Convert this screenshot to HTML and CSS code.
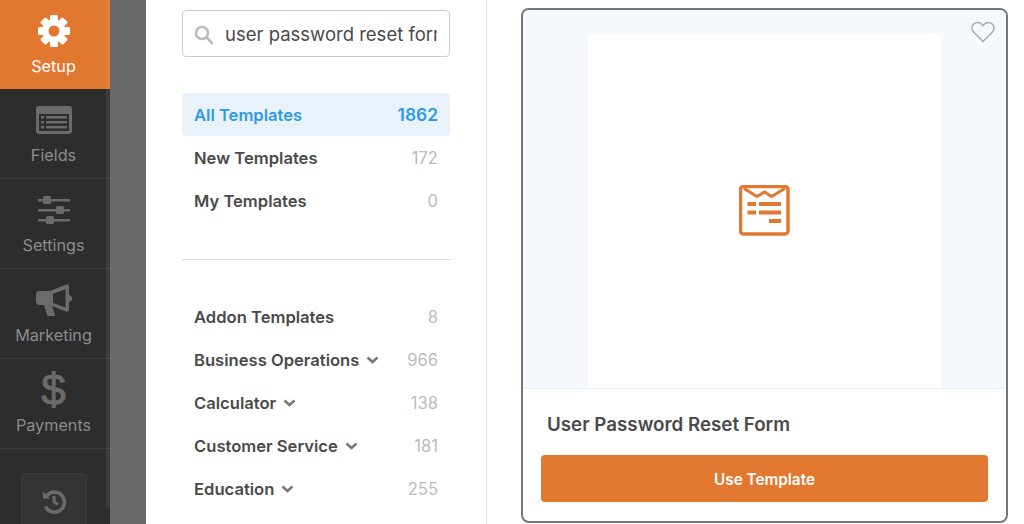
FILE: index.html
```html
<!DOCTYPE html>
<html lang="en">
<head>
<meta charset="UTF-8">
<title>Form Templates</title>
<link rel="stylesheet" href="styles.css">
</head>
<body>
<div class="page">
  <nav class="nav">
    <a class="nav-item active">
      <span class="nav-icon">
        <svg width="36" height="36" viewBox="0 0 36 36">
          <g fill="#fff">
            <rect x="14" y="2" width="8" height="32" rx="1.5"/>
            <rect x="14" y="2" width="8" height="32" rx="1.5" transform="rotate(45 18 18)"/>
            <rect x="14" y="2" width="8" height="32" rx="1.5" transform="rotate(90 18 18)"/>
            <rect x="14" y="2" width="8" height="32" rx="1.5" transform="rotate(135 18 18)"/>
          </g>
          <circle cx="18" cy="18" r="8.5" fill="none" stroke="#fff" stroke-width="6"/>
          <circle cx="18" cy="18" r="5.5" fill="#e27730"/>
        </svg>
      </span>
      <span class="nav-label">Setup</span>
    </a>
    <a class="nav-item">
      <span class="nav-icon">
        <svg width="36" height="28" viewBox="0 0 36 28">
          <rect width="36" height="28" rx="3" fill="#6b6b6b"/>
          <rect x="3" y="8" width="30" height="17" fill="#2d2d2d"/>
          <g fill="#6b6b6b">
            <rect x="5" y="10" width="3" height="2.5"/>
            <rect x="5" y="15" width="3" height="2.5"/>
            <rect x="5" y="20" width="3" height="2.5"/>
            <rect x="10" y="10" width="21" height="2.5"/>
            <rect x="10" y="15" width="21" height="2.5"/>
            <rect x="10" y="20" width="21" height="2.5"/>
          </g>
        </svg>
      </span>
      <span class="nav-label">Fields</span>
    </a>
    <a class="nav-item">
      <span class="nav-icon">
        <svg width="32" height="30" viewBox="0 0 32 30" fill="#6b6b6b">
          <rect y="4" width="32" height="2.5"/>
          <rect y="14" width="32" height="2.5"/>
          <rect y="24" width="32" height="2.5"/>
          <rect x="5" y="1" width="8" height="8" rx="1.5"/>
          <rect x="18" y="11" width="8" height="8" rx="1.5"/>
          <rect x="8" y="21" width="8" height="8" rx="1.5"/>
        </svg>
      </span>
      <span class="nav-label">Settings</span>
    </a>
    <a class="nav-item">
      <span class="nav-icon">
        <svg width="36" height="32" viewBox="0 0 36 32" fill="#6b6b6b">
          <path d="M0 10.500C0 8.500 1.500 7 3.500 7H14L30 .5C31.500 0 33 .500 33 2.500V11C35 11.500 36 12.800 36 14.500S35 17.500 33 18V25.500C33 27.500 31.500 28 30 27.500L16 22L19 30.500C19.300 31.500 18.500 32 17.800 32H12.500C11.800 32 11.300 31.500 11 30.800L8 21H3.500C1.500 21 0 19.500 0 17.500ZM17 10V19L29.500 23.500V5Z" fill-rule="evenodd"/>
        </svg>
      </span>
      <span class="nav-label">Marketing</span>
    </a>
    <a class="nav-item">
      <span class="nav-icon dollar">$</span>
      <span class="nav-label">Payments</span>
    </a>
    <div class="nav-bottom">
      <button class="undo-btn">
        <svg width="28" height="28" viewBox="0 0 28 28" fill="none" stroke="#6b6b6b" stroke-width="3.500">
          <path d="M7 8.500A10 10 0 1 1 5.500 19.500"/>
          <path d="M14 9V15L18 17.500" stroke-width="3"/>
          <path d="M3 4.500V11.500H10Z" fill="#6b6b6b" stroke="none"/>
        </svg>
      </button>
    </div>
    <div class="nav-scroll"></div>
  </nav>
  <div class="shade"></div>

  <aside class="panel">
    <div class="search">
      <svg class="search-icon" width="20" height="20" viewBox="0 0 20 20" fill="none" stroke="#bbb" stroke-width="2.500">
        <circle cx="8" cy="8" r="6"/>
        <path d="M12.500 12.500L18 18" stroke-linecap="round"/>
      </svg>
      <input class="search-input" type="text" value="user password reset form">
    </div>

    <ul class="tpl-list">
      <li class="tpl-row selected"><span class="tpl-name">All Templates</span><span class="tpl-count">1862</span></li>
      <li class="tpl-row"><span class="tpl-name">New Templates</span><span class="tpl-count">172</span></li>
      <li class="tpl-row"><span class="tpl-name">My Templates</span><span class="tpl-count">0</span></li>
    </ul>

    <hr class="divider">

    <ul class="tpl-list lower">
      <li class="tpl-row"><span class="tpl-name">Addon Templates</span><span class="tpl-count">8</span></li>
      <li class="tpl-row"><span class="tpl-name">Business Operations <svg class="chev" width="13" height="8" viewBox="0 0 13 8"><path d="M1.500 1.500L6.500 6L11.500 1.500"/></svg></span><span class="tpl-count">966</span></li>
      <li class="tpl-row"><span class="tpl-name">Calculator <svg class="chev" width="13" height="8" viewBox="0 0 13 8"><path d="M1.500 1.500L6.500 6L11.500 1.500"/></svg></span><span class="tpl-count">138</span></li>
      <li class="tpl-row"><span class="tpl-name">Customer Service <svg class="chev" width="13" height="8" viewBox="0 0 13 8"><path d="M1.500 1.500L6.500 6L11.500 1.500"/></svg></span><span class="tpl-count">181</span></li>
      <li class="tpl-row"><span class="tpl-name">Education <svg class="chev" width="13" height="8" viewBox="0 0 13 8"><path d="M1.500 1.500L6.500 6L11.500 1.500"/></svg></span><span class="tpl-count">255</span></li>
    </ul>
  </aside>

  <main class="main">
    <div class="card">
      <div class="preview">
        <svg class="heart" width="24" height="22" viewBox="0 0 24 22" fill="none" stroke="#aaa" stroke-width="1.500">
          <path d="M12 20.500L2.800 11.300C.4 8.900 .4 5.100 2.800 3C5.100 .9 8.600 1.200 10.700 3.300L12 4.600L13.300 3.300C15.400 1.200 18.900 .9 21.200 3C23.600 5.100 23.600 8.900 21.200 11.300Z"/>
        </svg>
        <div class="sheet">
          <svg class="form-icon" width="51" height="51" viewBox="0 0 51 51">
            <rect x="1.500" y="1.500" width="47.500" height="47.500" rx="3" fill="none" stroke="#e27730" stroke-width="3.500"/>
            <path d="M5 3.500L18 11.500L25.500 7L32.500 11.500L46 3.500" fill="none" stroke="#e27730" stroke-width="3"/>
            <g fill="#e27730">
              <rect x="8.500" y="17" width="8.500" height="4"/>
              <rect x="20" y="17" width="22" height="4"/>
              <rect x="8.500" y="25.500" width="8.500" height="4"/>
              <rect x="20" y="25.500" width="22" height="4"/>
              <rect x="30" y="34" width="12" height="4"/>
            </g>
          </svg>
        </div>
      </div>
      <div class="card-foot">
        <h3 class="card-title">User Password Reset Form</h3>
        <button class="use-btn">Use Template</button>
      </div>
    </div>
  </main>
</div>
</body>
</html>
```

FILE: styles.css
```css
* {
  box-sizing: border-box;
}

html,
body {
  margin: 0;
  height: 100%;
  overflow: hidden;
}

body {
  font-family: Inter, "Liberation Sans", sans-serif;
  color: #4a4a4a;
  background: #fff;
}

.page {
  display: flex;
  height: 524px;
}

/* left nav */
.nav {
  position: relative;
  flex: 0 0 110px;
  background: #2d2d2d;
}

.nav-item {
  display: flex;
  flex-direction: column;
  align-items: center;
  height: 90px;
  padding-top: 11px;
  border-bottom: 1px solid #3a3a3a;
}

.nav-item.active {
  height: 89px;
  background: #e27730;
  border-bottom: 0;
}

.nav-icon {
  display: flex;
  align-items: center;
  justify-content: center;
  height: 40px;
  margin-left: -3px;
}

.dollar {
  font-family: "Liberation Sans", sans-serif;
  font-size: 44px;
  color: #6b6b6b;
  -webkit-text-stroke: 1px #6b6b6b;
}

.nav-label {
  margin-top: 5px;
  margin-left: -3px;
  font-size: 16.2px;
  line-height: 20px;
  color: #8c8c8c;
}

.active .nav-label {
  color: #fff;
}

.nav-bottom {
  display: flex;
  justify-content: center;
  padding: 24px 2px 0 0;
}

.undo-btn {
  display: flex;
  justify-content: center;
  padding: 13px 0 0;
  width: 66px;
  height: 70px;
  background: #343434;
  border: 1px solid #393939;
  border-radius: 4px;
}

.nav-scroll {
  position: absolute;
  top: 0;
  right: 0;
  width: 4px;
  height: 508px;
  background: rgba(255, 255, 255, 0.07);
}

.shade {
  flex: 0 0 36px;
  background: #6a6a6a;
}

/* template filter panel */
.panel {
  flex: 0 0 341px;
  padding: 10px 36px 0;
  border-right: 1px solid #e2e2e2;
}

.search {
  position: relative;
  height: 47px;
}

.search-icon {
  position: absolute;
  left: 12px;
  top: 15px;
}

.search-input {
  width: 100%;
  height: 100%;
  padding: 0 12px 0 42px;
  border: 1px solid #ccc;
  border-radius: 4px;
  font-family: inherit;
  font-size: 18.5px;
  color: #4a4a4a;
  background: #fff;
}

.tpl-list {
  list-style: none;
  margin: 36px 0 0;
  padding: 0;
}

.tpl-list.lower {
  margin-top: 35px;
}

.tpl-row {
  display: flex;
  justify-content: space-between;
  align-items: center;
  height: 43px;
  padding: 0 12px;
  font-size: 16.6px;
}

.tpl-row.selected {
  background: #e9f2fb;
  border-radius: 4px;
  color: #2e9be8;
}

.tpl-name {
  display: flex;
  align-items: center;
  gap: 7px;
  font-weight: 600;
}

.tpl-count {
  color: #bbb;
}

.selected .tpl-count {
  color: #2e9be8;
  font-size: 17.4px;
  font-weight: 600;
}

.chev {
  fill: none;
  stroke: #777;
  stroke-width: 2.500;
}

.divider {
  margin: 37px -1px 0 0;
  border: 0;
  border-top: 1px solid #ddd;
}

/* template card */
.main {
  flex: 1;
  padding: 8px 16px 0 34px;
}

.card {
  height: 515px;
  border: 2px solid #777;
  border-radius: 8px;
  overflow: hidden;
}

.preview {
  position: relative;
  height: 379px;
  padding: 24px 65px 0;
  background: #f5f8fd;
  border-bottom: 1px solid #eceff3;
}

.heart {
  position: absolute;
  top: 11px;
  right: 11px;
}

.sheet {
  display: flex;
  align-items: center;
  justify-content: center;
  height: 100%;
  background: #fff;
}

.form-icon {
  margin-bottom: 2px;
}

.card-foot {
  padding: 25px 18px 0;
}

.card-title {
  margin: 0 0 19px 6px;
  font-size: 18.75px;
  line-height: 22px;
  font-weight: 600;
  color: #4a4a4a;
}

.use-btn {
  display: block;
  width: 100%;
  height: 47px;
  padding: 1px 0 0;
  border: 0;
  border-radius: 4px;
  background: #e27730;
  color: #fff;
  font-family: inherit;
  font-size: 15.3px;
  font-weight: 600;
}
```
